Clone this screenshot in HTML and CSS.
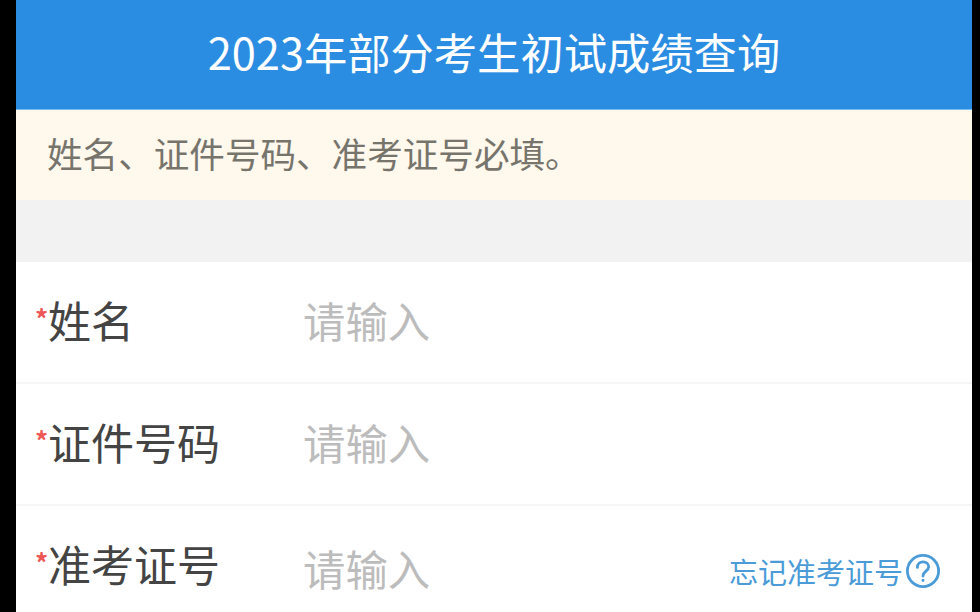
FILE: index.html
```html
<!DOCTYPE html>
<html lang="zh-CN">
<head>
    <meta charset="UTF-8">
    <meta name="viewport" content="width=device-width, initial-scale=1.0">
    <title>2023年部分考生初试成绩查询</title>
    <link rel="stylesheet" href="styles.css">
</head>
<body>
    <div class="page">
        <div class="top-bar">2023年部分考生初试成绩查询</div>
        <div class="notice">姓名、证件号码、准考证号必填。</div>
        <div class="spacer"></div>

        <!-- Query form -->
        <div class="form-row">
            <div class="label"><span class="star">*</span>姓名</div>
            <div class="placeholder">请输入</div>
        </div>
        <div class="form-row">
            <div class="label"><span class="star">*</span>证件号码</div>
            <div class="placeholder">请输入</div>
        </div>
        <div class="form-row form-row-last">
            <div class="label"><span class="star">*</span>准考证号</div>
            <div class="placeholder">请输入</div>
            <div class="forgot">
                <span>忘记准考证号</span>
                <svg class="help-icon" viewBox="0 0 36 36" width="36" height="36" fill="none" stroke="#4a9bd8" stroke-width="2.8" stroke-linecap="round">
                    <circle cx="18" cy="18" r="15.6"/>
                    <path d="M12.4 14.4c0-3.4 2.5-5.6 5.7-5.6s5.6 2.1 5.6 4.9c0 4.4-5.7 4.6-5.7 9.3"/>
                    <path d="M18 27.2v.4"/>
                </svg>
            </div>
        </div>
    </div>
</body>
</html>
```

FILE: styles.css
```css
html, body {
    margin: 0;
    height: 100%;
    background-color: #000;
}

body {
    font-family: "Noto Sans CJK SC", "Noto Sans", sans-serif;
    overflow: hidden;
}

.page {
    width: 956px;
    height: 612px;
    margin-left: 16px;
    background-color: #fff;
    overflow: hidden;
}

.top-bar {
    height: 110px;
    line-height: 102px;
    background-color: #2a8de2;
    border-bottom: 1px solid #7cc0f2;
    box-sizing: border-box;
    color: #fff;
    font-size: 43.3px;
    text-align: center;
}

.notice {
    height: 90px;
    line-height: 86px;
    padding-left: 31px;
    background-color: #fef8ed;
    color: #77746c;
    font-size: 35.6px;
}

.spacer {
    height: 62px;
    background-color: #f2f2f2;
}

.form-row {
    display: flex;
    align-items: center;
    height: 122px;
    box-sizing: border-box;
    padding-left: 19px;
    padding-right: 31px;
    padding-bottom: 6px;
    border-bottom: 2px solid #f6f6f6;
}

.label {
    width: 268px;
    color: #444;
    font-size: 43px;
    display: flex;
    align-items: center;
}

.star {
    width: 13px;
    color: #ee5555;
    font-size: 26px;
    font-weight: 700;
    line-height: 26px;
    margin-bottom: 2px;
}

.placeholder {
    flex: 1;
    color: #bcbcbc;
    font-size: 42.4px;
}

.form-row-last .placeholder {
    margin-top: 8px;
}

.forgot {
    display: flex;
    align-items: center;
    margin-top: 16px;
    color: #4a9bd8;
    font-size: 29px;
}

.help-icon {
    margin-left: 2px;
}
```
